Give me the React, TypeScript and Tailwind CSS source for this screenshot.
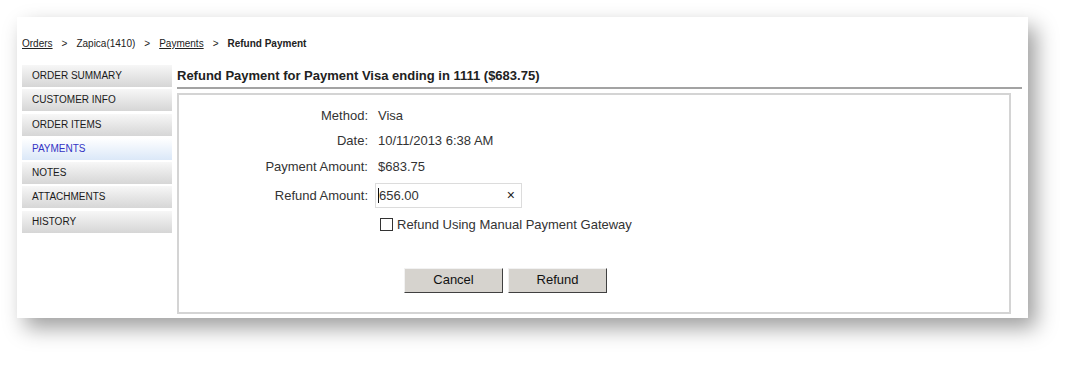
import React from 'react';

const navItems = [
  'ORDER SUMMARY',
  'CUSTOMER INFO',
  'ORDER ITEMS',
  'PAYMENTS',
  'NOTES',
  'ATTACHMENTS',
  'HISTORY',
];

const App: React.FC = () => {
  return (
    <div className="w-[1076px] h-[367px] bg-white pt-[17px] pl-[17px] font-['Liberation_Sans',Arial,sans-serif]">
      <div className="w-[1011px] h-[301px] bg-white shadow-[8px_10px_20px_rgba(0,0,0,0.38)] pl-[5px] pt-[21px]">
        {/* Breadcrumb */}
        <div className="flex items-center gap-[9px] text-[10px] leading-[12px] text-[#222]">
          <span className="underline">Orders</span>
          <span>&gt;</span>
          <span>Zapica(1410)</span>
          <span>&gt;</span>
          <span className="underline">Payments</span>
          <span>&gt;</span>
          <span className="font-bold">Refund Payment</span>
        </div>

        <div className="flex gap-[5px] mt-[15px]">
          {/* Sidebar */}
          <div className="w-[150px] flex flex-col gap-[2.3px]">
            {navItems.map((item) => (
              <div
                key={item}
                className={
                  item === 'PAYMENTS'
                    ? 'h-[22px] flex items-center pl-[10px] pb-[1px] text-[10px] text-[#3434c4] bg-gradient-to-b from-white to-[#dbe8f8]'
                    : 'h-[22px] flex items-center pl-[10px] pb-[1px] text-[10px] text-[#1a1a1a] bg-gradient-to-b from-[#f7f7f7] to-[#d6d6d6]'
                }
              >
                {item}
              </div>
            ))}
          </div>

          {/* Main */}
          <div className="w-[845px]">
            <div className="h-[24px] flex items-center text-[13px] font-bold text-[#222] border-b-2 border-[#a3a3a3]">
              Refund Payment for Payment Visa ending in 1111 ($683.75)
            </div>
            <div className="w-[834px] h-[221px] mt-[4px] border-2 border-[#d4d4d4] pt-[8px] text-[13px] text-[#333]">
              <div className="grid grid-cols-[189px_1fr] gap-x-[10px]">
                <div className="h-[25px] flex items-center justify-end">Method:</div>
                <div className="h-[25px] flex items-center">Visa</div>
                <div className="h-[26px] flex items-center justify-end">Date:</div>
                <div className="h-[26px] flex items-center">10/11/2013 6:38 AM</div>
                <div className="h-[25px] flex items-center justify-end">Payment Amount:</div>
                <div className="h-[25px] flex items-center">$683.75</div>

                <div className="h-[25px] mt-[4px] flex items-center justify-end">Refund Amount:</div>
                <div className="mt-[4px]">
                  <div className="w-[147px] h-[25px] -ml-[3px] border border-[#dcdcdc] flex items-center pl-[2px] pr-[6px]">
                    <span className="w-[1px] h-[15px] bg-[#111]" />
                    <span className="flex-1">656.00</span>
                    <span className="text-[14px] text-[#222]">×</span>
                  </div>
                </div>

                <div />
                <div className="mt-[7px] flex items-center gap-[4px]">
                  <span className="w-[13px] h-[13px] border border-[#333] bg-white ml-[2px]" />
                  <span>Refund Using Manual Payment Gateway</span>
                </div>

                <div />
                <div className="mt-[33px] flex gap-[5px] ml-[26px]">
                  <button className="w-[99px] h-[25px] bg-[#d6d3ce] border border-t-[#f2f2f2] border-l-[#f2f2f2] border-r-[#404040] border-b-[#404040] text-[13px] text-[#111]">
                    Cancel
                  </button>
                  <button className="w-[99px] h-[25px] bg-[#d6d3ce] border border-t-[#f2f2f2] border-l-[#f2f2f2] border-r-[#404040] border-b-[#404040] text-[13px] text-[#111]">
                    Refund
                  </button>
                </div>
              </div>
            </div>
          </div>
        </div>
      </div>
    </div>
  );
};

export default App;
